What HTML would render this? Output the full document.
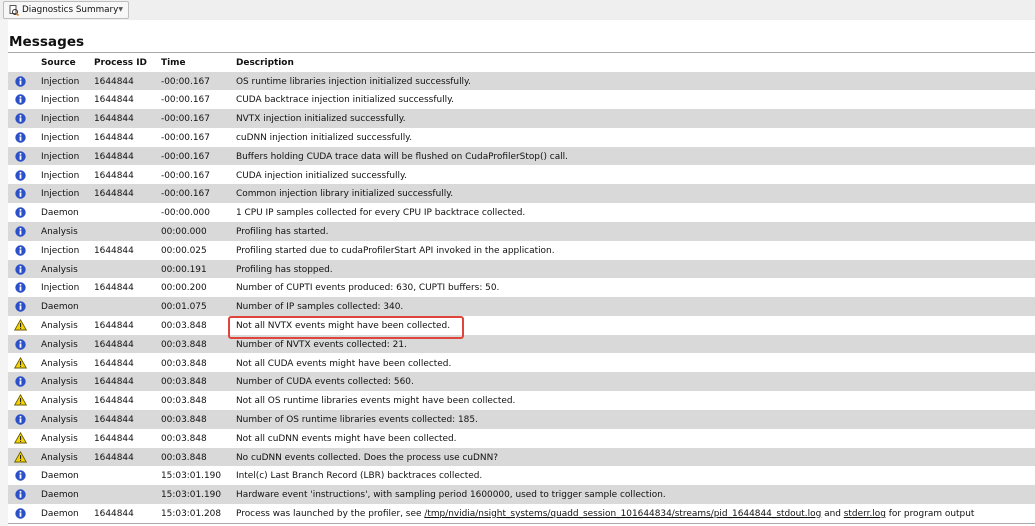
<!DOCTYPE html>
<html><head><style>
body{margin:0;width:1035px;height:526px;overflow:hidden;background:#fff;font-family:"DejaVu Sans","Liberation Sans",sans-serif;font-size:8.95px;color:#111;position:relative}
.top{position:absolute;left:0;top:0;width:1035px;height:20px;background:#efefef}
.btn{position:absolute;left:3px;top:1px;width:124px;height:16px;border:1px solid #bdbdbd;border-radius:2px;background:#f7f7f7;font-size:8.8px;line-height:16px}
.btn span{position:absolute;left:18px}
.btn i{position:absolute;right:5px;top:0px;font-style:normal;font-size:6px;color:#555}
.side{position:absolute;left:0;top:20px;width:8px;height:506px;background:#f4f4f4}
h1{position:absolute;left:9px;top:34px;margin:0;font-size:13.6px;font-weight:bold}
.hl{position:absolute;left:8px;top:52px;width:1027px;height:1px;background:#aaa}
.row{position:absolute;left:8px;width:1027px;height:18.8px;line-height:18.8px;white-space:nowrap}
.g{background:#d9d9d9}
.row span{position:absolute}
.c1{left:33px}.c2{left:86px}.c3{left:153px}.c4{left:228px}
.hd{font-weight:bold}
.red{position:absolute;left:228px;top:316px;width:232px;height:19px;border:2px solid #e0453c;border-radius:3px}
.bl{position:absolute;left:8px;top:523px;width:1027px;height:1px;background:#aaa}
u{text-decoration:underline}
</style></head><body>
<div class="top"><div class="btn"><svg style="position:absolute;left:5px;top:3px" width="10" height="11"><rect x="1" y="0.5" width="6" height="8" fill="#fff" stroke="#555"/><circle cx="6" cy="7" r="2.5" fill="none" stroke="#333"/><path d="M7.5 8.5l2 2" stroke="#e07000" stroke-width="1.5"/></svg><span>Diagnostics Summary</span><i>▼</i></div></div>
<div class="side"></div>
<h1>Messages</h1>
<div class="hl"></div>
<div class="row hd" style="top:53.5px"><span class="c1">Source</span><span class="c2">Process ID</span><span class="c3">Time</span><span class="c4">Description</span></div>
<div id="t"></div>
<div class="red"></div>
<div class="bl"></div>
<script>
const I='<svg style="position:absolute;left:7px;top:4px" width="11" height="11"><circle cx="5.5" cy="5.5" r="5.2" fill="#2b50c8"/><rect x="4.6" y="4.5" width="1.8" height="4.2" fill="#fff"/><circle cx="5.5" cy="2.9" r="1" fill="#fff"/></svg>';
const W='<svg style="position:absolute;left:6px;top:3px" width="13" height="12"><path d="M6.5 0.8L12.3 11H0.7Z" fill="#f2d200" stroke="#6b5a00" stroke-width="0.9"/><rect x="6" y="4" width="1.1" height="4" fill="#222"/><rect x="6" y="8.8" width="1.1" height="1.1" fill="#222"/></svg>';
const d=[
['i','Injection','1644844','-00:00.167','OS runtime libraries injection initialized successfully.'],
['i','Injection','1644844','-00:00.167','CUDA backtrace injection initialized successfully.'],
['i','Injection','1644844','-00:00.167','NVTX injection initialized successfully.'],
['i','Injection','1644844','-00:00.167','cuDNN injection initialized successfully.'],
['i','Injection','1644844','-00:00.167','Buffers holding CUDA trace data will be flushed on CudaProfilerStop() call.'],
['i','Injection','1644844','-00:00.167','CUDA injection initialized successfully.'],
['i','Injection','1644844','-00:00.167','Common injection library initialized successfully.'],
['i','Daemon','','-00:00.000','1 CPU IP samples collected for every CPU IP backtrace collected.'],
['i','Analysis','','00:00.000','Profiling has started.'],
['i','Injection','1644844','00:00.025','Profiling started due to cudaProfilerStart API invoked in the application.'],
['i','Analysis','','00:00.191','Profiling has stopped.'],
['i','Injection','1644844','00:00.200','Number of CUPTI events produced: 630, CUPTI buffers: 50.'],
['i','Daemon','','00:01.075','Number of IP samples collected: 340.'],
['w','Analysis','1644844','00:03.848','Not all NVTX events might have been collected.'],
['i','Analysis','1644844','00:03.848','Number of NVTX events collected: 21.'],
['w','Analysis','1644844','00:03.848','Not all CUDA events might have been collected.'],
['i','Analysis','1644844','00:03.848','Number of CUDA events collected: 560.'],
['w','Analysis','1644844','00:03.848','Not all OS runtime libraries events might have been collected.'],
['i','Analysis','1644844','00:03.848','Number of OS runtime libraries events collected: 185.'],
['w','Analysis','1644844','00:03.848','Not all cuDNN events might have been collected.'],
['w','Analysis','1644844','00:03.848','No cuDNN events collected. Does the process use cuDNN?'],
['i','Daemon','','15:03:01.190','Intel(c) Last Branch Record (LBR) backtraces collected.'],
['i','Daemon','','15:03:01.190',"Hardware event 'instructions', with sampling period 1600000, used to trigger sample collection."],
['i','Daemon','1644844','15:03:01.208','Process was launched by the profiler, see <u>/tmp/nvidia/nsight_systems/quadd_session_101644834/streams/pid_1644844_stdout.log</u> and <u>stderr.log</u> for program output']];
let h='';d.forEach((r,i)=>{h+=`<div class="row${i%2==0?' g':''}" style="top:${71.5+i*18.8}px">${r[0]=='i'?I:W}<span class="c1" style="top:1px">${r[1]}</span><span class="c2" style="top:1px">${r[2]}</span><span class="c3" style="top:1px">${r[3]}</span><span class="c4" style="top:1px">${r[4]}</span></div>`});
document.getElementById('t').innerHTML=h;
</script>
</body></html>
